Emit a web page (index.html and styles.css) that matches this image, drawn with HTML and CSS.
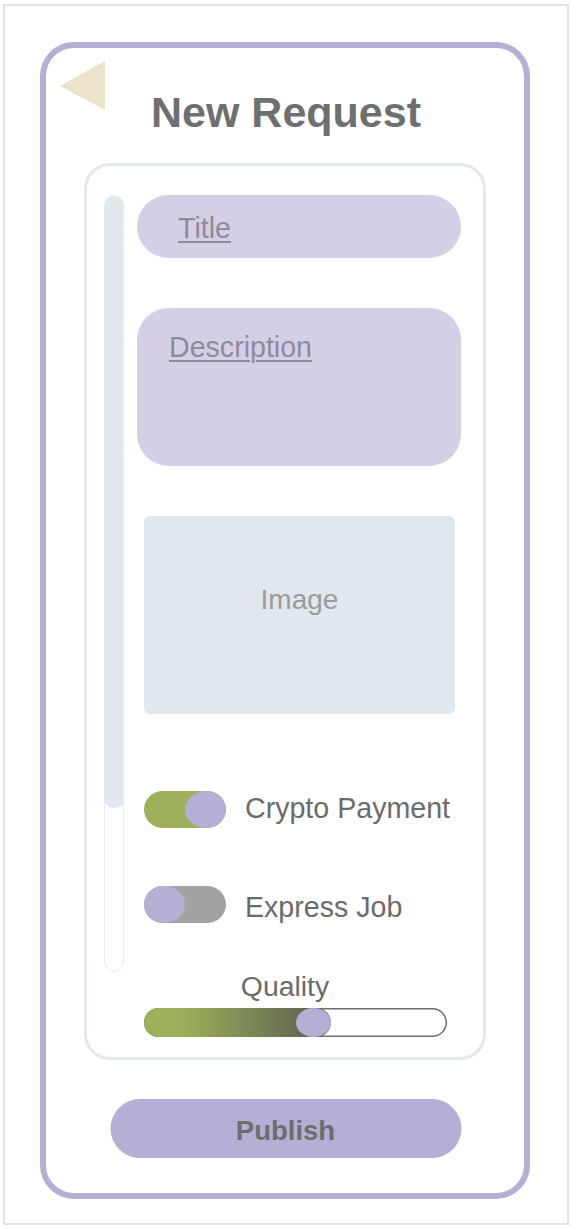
FILE: index.html
```html
<!DOCTYPE html>
<html>
<head>
<meta charset="utf-8">
<link rel="stylesheet" href="styles.css">
</head>
<body>
<div class="page">
  <div class="phone">
    <div class="header">
      <svg class="back" width="45" height="49" viewBox="0 0 45 49"><polygon points="0,25 45,0 45,49" fill="#ebe3ca"/></svg>
      <h1 class="heading">New Request</h1>
      <span></span>
    </div>
    <div class="card">
      <div class="scroll-area">
        <div class="scrollbar"><div class="thumb"></div></div>
        <div class="fields">
          <div class="field field-title"><span class="placeholder">Title</span></div>
          <div class="field field-desc"><span class="placeholder">Description</span></div>
          <div class="image-box"><span>Image</span></div>
          <div class="toggle-row row-crypto">
            <div class="toggle on"><div class="knob"></div></div>
            <span class="label">Crypto Payment</span>
          </div>
          <div class="toggle-row row-express">
            <div class="toggle off"><div class="knob"></div></div>
            <span class="label label-down">Express Job</span>
          </div>
        </div>
      </div>
      <div class="quality">
        <div class="quality-label">Quality</div>
        <div class="slider">
          <div class="slider-fill"><div class="slider-knob"></div></div>
        </div>
      </div>
    </div>
    <div class="actions">
      <button class="publish">Publish</button>
    </div>
  </div>
</div>
</body>
</html>
```

FILE: styles.css
```css
* { box-sizing: border-box; }
html, body { margin: 0; padding: 0; background: #ffffff; }
body { font-family: "Liberation Sans", Arial, Helvetica, sans-serif; }

.page {
  margin: 4px 0 0 3px;
  width: 566px;
  height: 1221px;
  border: 2px solid #e3e3e3;
  padding: 36px 0 0 35px;
}

.phone {
  width: 490px;
  height: 1157px;
  border: 6px solid #b5aed5;
  border-radius: 34px;
  display: flex;
  flex-direction: column;
  align-items: center;
}

.header {
  width: 100%;
  display: grid;
  grid-template-columns: 1fr auto 1fr;
  align-items: start;
  padding: 13px 0 0 14px;
}
.back { display: block; }
.heading {
  margin: 30px 0 0 0;
  font-size: 43px;
  line-height: 43px;
  font-weight: 700;
  color: #6f6f6f;
  transform: translateX(-6px);
}

.card {
  margin-top: 29px;
  width: 402px;
  height: 897px;
  border: 3px solid #e1e9ee;
  border-radius: 26px;
  padding: 29px 17px 0 17px;
}

.scroll-area {
  display: flex;
  height: 777px;
  gap: 13px;
}
.scrollbar {
  width: 20px;
  height: 777px;
  border-radius: 10px;
  border: 1.5px solid #e6edf1;
  background: #fff;
  overflow: hidden;
}
.thumb {
  height: 613px;
  margin: -1.5px;
  border-radius: 10px;
  background: #e0e8ee;
}

.fields {
  width: 324px;
  display: flex;
  flex-direction: column;
}
.field {
  background: #d4cfe6;
  font-size: 28.6px;
  line-height: 32px;
  color: #8f8b9b;
}
.placeholder { text-decoration: underline; text-decoration-thickness: 1.5px; text-underline-offset: 3px; }
.field-title {
  height: 63px;
  border-radius: 32px;
  padding-left: 41px;
  padding-top: 3px;
  display: flex;
  align-items: center;
}
.field-desc {
  margin-top: 50px;
  height: 158px;
  border-radius: 32px;
  padding: 23px 0 0 32px;
}

.image-box {
  margin: 50px 6px 0 7px;
  height: 198px;
  border-radius: 6px;
  background: #e0e8ee;
  display: flex;
  justify-content: center;
  align-items: flex-start;
  padding-top: 70px;
  font-size: 28px;
  line-height: 28px;
  color: #9b9b9b;
}

.toggle-row {
  display: flex;
  align-items: center;
  gap: 19px;
  padding-left: 7px;
  font-size: 28.6px;
  line-height: 32px;
  color: #6b6b6b;
}
.row-crypto { margin-top: 77px; }
.row-express { margin-top: 58px; }
.toggle {
  width: 82px;
  height: 37px;
  border-radius: 19px;
  display: flex;
}
.toggle.on { background: #9db15b; justify-content: flex-end; }
.toggle.off { background: #a3a3a3; justify-content: flex-start; }
.knob {
  width: 41px;
  height: 37px;
  border-radius: 50%;
  background: #b5aed5;
}
.label { transform: translateY(-2px); }
.label-down { transform: translateY(2px); }

.quality {
  display: flex;
  flex-direction: column;
}
.quality-label {
  text-align: center;
  font-size: 28.4px;
  line-height: 28px;
  color: #6b6b6b;
}
.slider {
  margin: 8px 0 0 40px;
  width: 303px;
  height: 29px;
  border-radius: 15px;
  background: #fff;
  box-shadow: inset 0 0 0 1.5px #6e6e6e;
  display: flex;
}
.slider-fill {
  width: 187px;
  height: 29px;
  border-radius: 15px;
  background: linear-gradient(to right, #9db15b 0%, #9db15b 18%, #5e6251 92%);
  display: flex;
  justify-content: flex-end;
}
.slider-knob {
  width: 35px;
  height: 29px;
  border-radius: 50%;
  background: #b5aed5;
}

.actions {
  margin-top: 39px;
}
.publish {
  width: 351px;
  height: 59px;
  border: none;
  border-radius: 30px;
  background: #b5aed5;
  font-family: "Liberation Sans", Arial, Helvetica, sans-serif;
  font-size: 27.5px;
  font-weight: 700;
  color: #6d6d6d;
  padding: 5px 0 0 0;
  transform: translateX(0.5px);
}
```
